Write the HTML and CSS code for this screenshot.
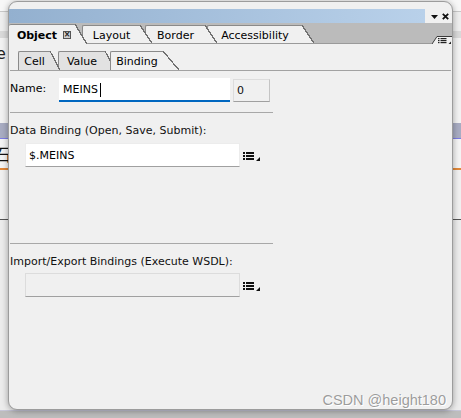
FILE: index.html
```html
<!DOCTYPE html>
<html>
<head>
<meta charset="utf-8">
<link rel="stylesheet" href="styles.css">
</head>
<body>
<div class="desk">
  <div class="stripe s1"></div>
  <div class="stripe s2"></div>
  <div class="stripe s3"></div>
  <div class="stripe s4"></div>
  <div class="stripe s5"><span class="peek-e">e</span></div>
  <div class="stripe s6"></div>
  <div class="stripe s7"></div>
  <div class="stripe s8"><span class="peek-c">石</span></div>
  <div class="stripe s9"></div>
  <div class="stripe s10"></div>
  <div class="stripe s11"></div>
  <div class="stripe s12"></div>
  <div class="stripe s13"></div>
  <div class="stripe s14"></div>

  <div class="panel">
    <div class="titlebar">
      <div class="title-grad"></div>
      <div class="title-btns">
        <svg class="tb-arrow" width="7" height="4" viewBox="0 0 7 4"><polygon points="0,0 7,0 3.5,4" fill="#111"/></svg>
        <svg class="tb-close" width="7" height="7" viewBox="0 0 7 7"><path d="M0.8 0.8 L6.2 6.2 M6.2 0.8 L0.8 6.2" stroke="#111" stroke-width="1.8"/></svg>
      </div>
    </div>

    <div class="tabstrip">
      <div class="tab t-object active"><b>Object</b><span class="xbox">×</span></div>
      <div class="tab t-layout">Layout</div>
      <div class="tab t-border">Border</div>
      <div class="tab t-access">Accessibility</div>
      <svg class="strip-menu" width="20" height="8" viewBox="0 0 20 8">
        <polygon points="0,8 5,0.5 20,0.5 20,8" fill="#f0f0f0"/>
        <path d="M0 8 L5 0.5 L20 0.5" fill="none" stroke="#3c3c3c" stroke-width="1"/>
        <rect x="6" y="2" width="1.5" height="1.2" fill="#222"/>
        <rect x="8.5" y="2" width="6" height="1.2" fill="#222"/>
        <rect x="6" y="4" width="1.5" height="1.2" fill="#222"/>
        <rect x="8.5" y="4" width="6" height="1.2" fill="#222"/>
        <rect x="6" y="6" width="1.5" height="1.2" fill="#222"/>
        <rect x="8.5" y="6" width="6" height="1.2" fill="#222"/>
        <polygon points="16.5,8 19,8 19,5.5" fill="#222"/>
      </svg>
    </div>

    <div class="subtabs">
      <div class="stab st-cell">Cell</div>
      <div class="stab st-value">Value</div>
      <div class="stab st-binding active">Binding</div>
    </div>

    <div class="content">
      <div class="name-row">
        <span class="name-label">Name:</span>
        <div class="field name-field">MEINS<span class="caret"></span></div>
        <div class="field zero-field">0</div>
      </div>
      <div class="sep"></div>
      <div class="label">Data Binding (Open, Save, Submit):</div>
      <div class="bind-row">
        <div class="field bind-field">$.MEINS</div>
        <svg class="list-ico" width="18" height="10" viewBox="0 0 18 10">
          <rect x="0" y="0" width="2" height="2" fill="#111"/>
          <rect x="3" y="0" width="8" height="2" fill="#111"/>
          <rect x="0" y="3" width="2" height="2" fill="#111"/>
          <rect x="3" y="3" width="8" height="2" fill="#111"/>
          <rect x="0" y="6" width="2" height="2" fill="#111"/>
          <rect x="3" y="6" width="8" height="2" fill="#111"/>
          <polygon points="13,9 17,9 17,5" fill="#111"/>
        </svg>
      </div>
      <div class="sep sep2"></div>
      <div class="label label2">Import/Export Bindings (Execute WSDL):</div>
      <div class="bind-row bind-row2">
        <div class="field import-field"></div>
        <svg class="list-ico" width="18" height="10" viewBox="0 0 18 10">
          <rect x="0" y="0" width="2" height="2" fill="#111"/>
          <rect x="3" y="0" width="8" height="2" fill="#111"/>
          <rect x="0" y="3" width="2" height="2" fill="#111"/>
          <rect x="3" y="3" width="8" height="2" fill="#111"/>
          <rect x="0" y="6" width="2" height="2" fill="#111"/>
          <rect x="3" y="6" width="8" height="2" fill="#111"/>
          <polygon points="13,9 17,9 17,5" fill="#111"/>
        </svg>
      </div>
    </div>

    <div class="watermark">CSDN @height180</div>
  </div>
</div>
</body>
</html>
```

FILE: styles.css
```css
* { box-sizing: border-box; }
html, body { margin: 0; padding: 0; }
body {
  width: 461px;
  height: 418px;
  overflow: hidden;
  font-family: "DejaVu Sans", Verdana, sans-serif;
  font-size: 11px;
  color: #000;
  background: #f0f0f0;
}
.desk { position: relative; width: 461px; height: 418px; overflow: hidden; }
.stripe { width: 100%; position: relative; overflow: hidden; }
.s1 { height: 11px; background: #f7f7f7; }
.s2 { height: 1px; background: #c8c8c8; }
.s3 { height: 19px; background: #eeeeee; }
.s4 { height: 7px; background: #d9d9d9; }
.s5 { height: 85px; background: #f2f2f2; }
.s6 { height: 15px; background: #a8acc2; }
.s7 { height: 1px; background: #7c7ce4; }
.s8 { height: 29px; background: #f4f4f4; }
.s9 { height: 2px; background: #e0883a; }
.s10 { height: 49px; background: #f0f0f0; }
.s11 { height: 1px; background: #555555; }
.s12 { height: 190px; background: #ececec; }
.s13 { height: 1px; background: #c6c6d8; }
.s14 { height: 7px; background: #bdbdbd; }
.peek-e {
  position: absolute; left: -4px; top: 6px;
  font-family: "DejaVu Sans", sans-serif; font-size: 16px; color: #222;
}
.peek-c {
  position: absolute; left: -6px; top: 2px;
  font-family: "Noto Sans CJK SC", sans-serif; font-size: 17px; color: #111;
}

/* floating panel */
.panel {
  position: absolute;
  left: 8px; top: 1px;
  width: 445px; height: 409px;
  border: 1px solid #9c9c9c;
  border-radius: 9px;
  background: #f0f0f0;
  box-shadow: 0 1px 6px rgba(0,0,0,0.35);
  overflow: hidden;
  display: flex;
  flex-direction: column;
}
.titlebar {
  margin-top: 7px;
  height: 14px;
  display: flex;
  flex: none;
}
.title-grad {
  flex: 1;
  background: linear-gradient(to right, #93b0cf, #b9d1ea);
}
.title-btns {
  width: 27px;
  display: flex;
  align-items: center;
  gap: 4px;
  padding-left: 6px;
}
.tb-arrow { margin-top: 1px; }

.tabstrip {
  height: 21px;
  flex: none;
  background: #bbbbbb;
  border-bottom: 1px solid #9a9a9a;
  display: flex;
  align-items: flex-end;
  position: relative;
}
.tab {
  position: relative;
  height: 18px;
  background: #f0f0f0;
  border-top: 1px solid #8a8a8a;
  border-left: 1px solid #8a8a8a;
  border-top-left-radius: 2px;
  display: flex;
  align-items: center;
  justify-content: center;
  padding-top: 1px;
  white-space: nowrap;
}
.tab::after {
  content: "";
  position: absolute;
  top: -1px;
  right: -12px;
  width: 12px;
  height: calc(100% + 1px);
  background: linear-gradient(to bottom left, transparent calc(50% - 0.6px), #707070 calc(50% - 0.6px), #707070 calc(50% + 0.7px), #f0f0f0 calc(50% + 0.7px));
}
.tab.active {
  height: 20px;
  margin-bottom: -1px;
  border-left: none;
}
.t-object { width: 66px; margin-right: 7px; z-index: 5; padding-left: 4px; }
.t-layout { width: 58px; margin-right: 5px; z-index: 4; }
.t-border { width: 60px; margin-right: 2px; z-index: 3; }
.t-access { width: 95px; z-index: 2; }
.t-object b { font-weight: bold; }
.xbox {
  display: inline-flex;
  align-items: center;
  justify-content: center;
  width: 8px; height: 8px;
  margin-left: 6px;
  border: 1px solid #555;
  background: #cfcfcf;
  font-size: 8px;
  line-height: 1;
  font-weight: bold;
  color: #222;
}
.strip-menu {
  position: absolute;
  right: 0; bottom: -1px;
}

.subtabs {
  height: 27px;
  flex: none;
  display: flex;
  align-items: flex-end;
  margin: 0 1px;
  border-bottom: 1px solid #a2a2a2;
  padding-left: 8px;
}
.stab {
  position: relative;
  height: 19px;
  background: #e2e2e2;
  border-top: 1px solid #8a8a8a;
  border-left: 1px solid #8a8a8a;
  border-top-left-radius: 2px;
  display: flex;
  align-items: center;
  justify-content: center;
  padding-top: 1px;
}
.stab::after {
  content: "";
  position: absolute;
  top: -1px;
  right: -10px;
  width: 10px;
  height: calc(100% + 1px);
  background: linear-gradient(to bottom left, transparent calc(50% - 0.6px), #707070 calc(50% - 0.6px), #707070 calc(50% + 0.7px), #e2e2e2 calc(50% + 0.7px));
}
.stab.active { background: #f0f0f0; }
.stab.active::after {
  right: -16px;
  width: 16px;
  background: linear-gradient(to bottom left, transparent calc(50% - 0.6px), #707070 calc(50% - 0.6px), #707070 calc(50% + 0.7px), #f0f0f0 calc(50% + 0.7px));
}
.st-cell { width: 32px; margin-right: 8px; z-index: 2; }
.st-value { width: 47px; margin-right: 5px; z-index: 1; }
.st-binding { width: 53px; z-index: 3; }

.content {
  padding-left: 1px;
  padding-top: 7px;
  display: flex;
  flex-direction: column;
}
.name-row {
  display: flex;
  align-items: flex-start;
  height: 24px;
}
.name-label {
  width: 49px;
  line-height: 22px;
}
.field {
  height: 24px;
  display: flex;
  align-items: center;
  padding-left: 3px;
}
.name-field {
  width: 171px;
  background: #fff;
  border-bottom: 2px solid #0067c0;
  padding-left: 4px;
  padding-top: 1px;
}
.caret {
  display: inline-block;
  width: 1px; height: 14px;
  background: #000;
  margin-left: 2px;
}
.zero-field {
  width: 37px;
  height: 23px;
  margin-left: 3px;
  margin-top: 1px;
  background: #f0f0f0;
  border: 1px solid #dcdcdc;
  border-bottom-color: #a0a0a0;
  border-right-color: #c4c4c4;
  padding-left: 3px;
  color: #111;
}
.sep {
  width: 263px;
  height: 1px;
  background: #a8a8a8;
  margin-top: 10px;
}
.sep2 { margin-top: 76px; }
.label {
  line-height: 14px;
  margin-top: 11px;
  color: #111;
}
.label2 { margin-top: 11px; }
.bind-row {
  display: flex;
  align-items: center;
  margin-top: 5px;
  margin-left: 15px;
}
.bind-row2 { margin-top: 4px; }
.bind-field {
  width: 215px;
  background: #fff;
  border: 1px solid #ececec;
  border-bottom-color: #a0a0a0;
  padding-top: 1px;
}
.import-field {
  width: 215px;
  background: #f0f0f0;
  border: 1px solid #dcdcdc;
  border-bottom-color: #a0a0a0;
}
.list-ico { margin-left: 3px; margin-top: 4px; }

.watermark {
  position: absolute;
  right: 6px;
  bottom: 1px;
  font-family: "Liberation Sans", Arial, sans-serif;
  font-size: 14.5px;
  color: #9c9c9c;
  text-shadow: 0 0 1px #fff, 1px 1px 0 #fff;
}
```
